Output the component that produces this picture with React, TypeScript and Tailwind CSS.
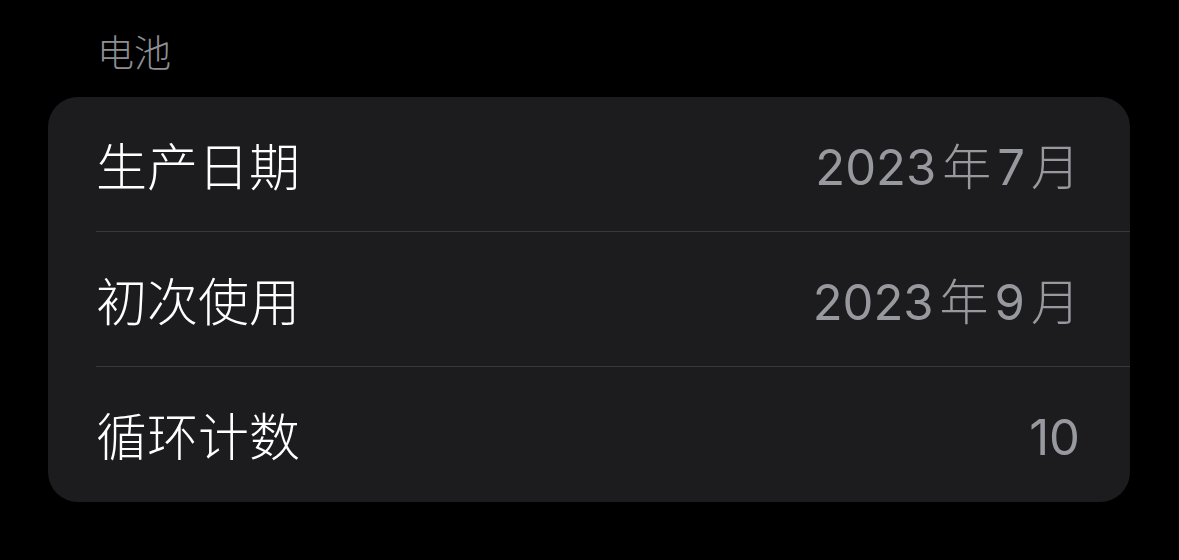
import React from "react";

const rows = [
  { label: "生产日期", value: ["2023", "年", "7", "月"] },
  { label: "初次使用", value: ["2023", "年", "9", "月"] },
  { label: "循环计数", value: ["10"] },
];

// CJK glyphs in the value get a little breathing room, like the iOS settings list
function Value({ parts }: { parts: string[] }) {
  return (
    <span className="flex items-baseline text-[49px] text-[#98989f] leading-none">
      {parts.map((p, i) =>
        /[0-9]/.test(p) ? (
          <span key={i}>{p}</span>
        ) : (
          <span key={i} className="mx-[6px] last:mr-0 font-light">
            {p}
          </span>
        )
      )}
    </span>
  );
}

export default function App() {
  return (
    <div
      className="w-[1179px] h-[560px] bg-black pt-[30px] pl-[48px] pr-[49px]"
      style={{ fontFamily: '"Inter", "Noto Sans CJK SC", sans-serif' }}
    >
      {/* Section header */}
      <div className="pl-[49px] h-[67px] text-[37px] leading-[48px] text-[#8e8e93] font-light">
        电池
      </div>

      {/* Grouped list */}
      <div className="bg-[#1c1c1e] rounded-[30px] overflow-hidden">
        {rows.map((row, i) => (
          <div key={row.label} className="pl-[48px]">
            <div
              className={
                "h-[135px] pt-[6px] flex items-center justify-between pr-[50px]" +
                (i < rows.length - 1 ? " border-b border-[#38383a]" : "")
              }
            >
              <span className="text-[51px] text-white leading-none font-light">{row.label}</span>
              <Value parts={row.value} />
            </div>
          </div>
        ))}
      </div>
    </div>
  );
}
